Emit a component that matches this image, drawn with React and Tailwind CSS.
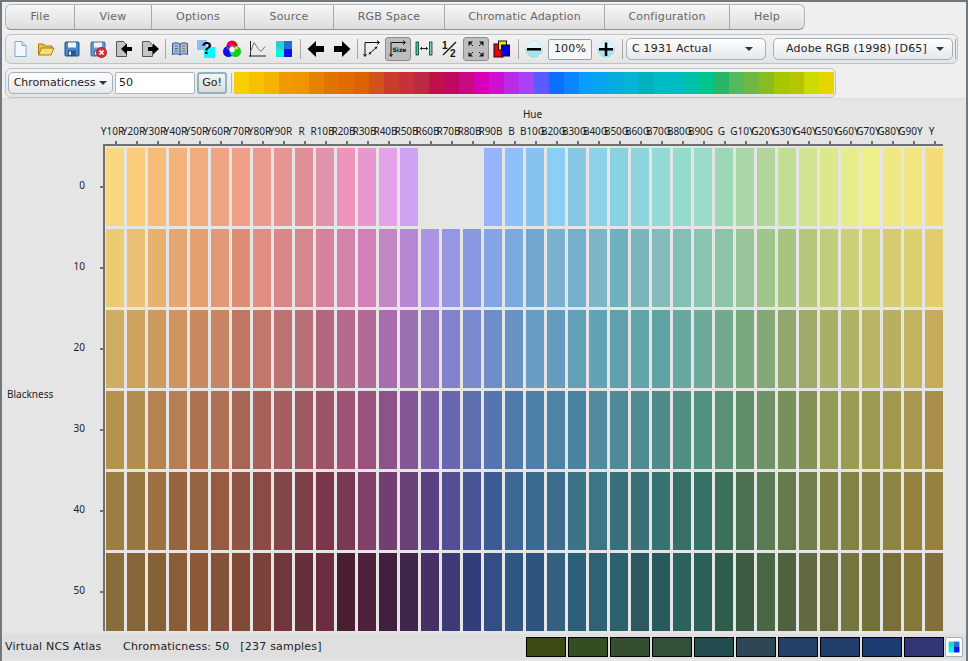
import React from "react";

const UI = { fontFamily: '"DejaVu Sans", sans-serif' };
const CH = { fontFamily: '"Noto Sans", sans-serif' };

const menus = [
  ["File", "w-[68px]"], ["View", "w-[77px]"], ["Options", "w-[93px]"], ["Source", "w-[89px]"],
  ["RGB Space", "w-[111px]"], ["Chromatic Adaption", "w-[160px]"], ["Configuration", "w-[125px]"], ["Help", "w-[75px]"],
];

const hues = ["Y10R","Y20R","Y30R","Y40R","Y50R","Y60R","Y70R","Y80R","Y90R","R","R10B","R20B","R30B","R40B","R50B","R60B","R70B","R80B","R90B","B","B10G","B20G","B30G","B40G","B50G","B60G","B70G","B80G","B90G","G","G10Y","G20Y","G30Y","G40Y","G50Y","G60Y","G70Y","G80Y","G90Y","Y"];

const rows = [
  ["f9d880","f9cb7b","f6bc78","f4b37a","f2ab7e","efa583","f1a088","eb9b8d","e79592","e08f96","e093ab","ee95bc","e898cd","e4a3e8","d0a2f1",null,null,null,"97b3fe","90c0fa","88c3f0","8ccff5","88c7e3","8ed1e8","88d1df","8dd4dd","94d9d6","95dccf","9bdcc8","9dd8b6","aad7a9","b1d59c","c1de97","d1e595","dde88d","e7ed8a","edef8b","efe783","f3e580","f6db7b"],
  ["edcb70","ebbf74","e7b26e","e4a771","e4a070","e09a78","de8e74","e18f82","db8787","d6868d","d7829b","d183a9","d280b7","c487c3","b786d4","ad94e4","9597e0","8698e0","87a5e5","7daade","72a8d0","7ab1d0","76afcb","7eb5c9","70b0bd","7cb4bd","85bcbb","83bfb5","88c5b1","8cc4a8","98c59a","a0c68e","a7c481","b6c87c","c1cc7c","ccd079","d1d374","d6cc6f","ddd06f","e4cd6d"],
  ["cfae62","cda35d","cb9c5e","cf945f","c88a5e","c78664","c17863","c1776a","bc7270","b87176","b36880","b5698c","b36a96","a96cac","9c6fb0","9178bf","8482ce","7a88d0","6f8dca","6893c1","689dc6","659bbd","62a0b8","63a3b8","5fa0ab","61a4aa","5ea3a2","69a8a0","6daa99","73a98c","79a97e","85a877","91a76d","a0aa68","a8b067","b0b264","b8b565","b8ae5f","c3b560","c5ab5b"],
  ["b5934d","b38e4f","b6824f","b67e51","ae7451","af7053","a66654","a5615a","a65f60","9e5862","995566","9e5274","98527c","8d528a","845695","7c60a6","6766ae","5e6fae","5674b0","5079ac","4f80aa","4c83a6","4b84a2","538a9f","4f8a96","4f8a92","50898a","528d83","529180","5a9076","608e66","6f9366","78915b","859257","939a55","9c9b52","9c9b52","a39850","aa9850","a98f49"],
  ["9c7f41","997542","9c7042","976640","946341","965b41","915641","894b45","814647","7e3e4a","7c384b","783954","7f3f66","733e70","6a4079","5a4080","514e92","475395","3c5a93","3e6894","3b6a90","3d6e8f","3c7486","3f7585","376f7b","3b6f75","347370","376f68","347265","3d7159","4b7150","5a7a54","647a4b","727f4c","7e8247","828247","868144","8d8342","938140","968140"],
  ["886c39","866638","866037","895d38","8c5939","845139","814a38","7a413a","6f363b","63303a","6c2e3e","4a1e31","4f213c","41203f","3e254a","453165","3e3a75","323d7b","344e83","2f5580","2f557e","33607c","2c5f78","316273","2d616c","2e585f","285a5b","2d615d","2c5f58","305c4c","3c5c42","496645","4e6140","60693f","696c3e","74753e","73713a","7a6f3a","86773c","84703a"],
];

const strip = ["f5cf00","f7c100","f5b300","f09a00","f09400","e68200","e17400","e06c00","dd6300","d2521a","c73c2a","c8303a","bb2a40","c0104a","bd0a60","c90a85","d600b8","cf10d0","b82ae4","a844f5","5b5cff","0a70ff","0a84ff","0a9dfd","08a4ee","05aede","05b4d6","00b0c0","00bcc8","00bcc0","00c0a8","00c58d","28b56a","52ba5a","6fb940","88bc20","a5c800","b5c500","cddb00","e8d500"];

const swatches = ["3d4a14","344d22","344f30","324f3a","234c4f","2d4756","233f66","1f3c6b","1b3c70","333574"];

function Sep({ w = "w-[6px]" }) {
  return (
    <div className={`${w} flex justify-center shrink-0`}>
      <div className="w-px h-[20px] bg-[#a8a8a8]" />
    </div>
  );
}

function Tool({ children, on }) {
  return (
    <div className={`w-[26px] h-[24px] shrink-0 flex items-center justify-center rounded-[3px] ${on ? "bg-[#bdbdbd] border border-[#8d8d8d]" : ""}`}>
      {children}
    </div>
  );
}

const Svg = ({ children, s = 18 }) => (
  <svg width={s} height={s} viewBox="0 0 18 18">{children}</svg>
);

const Floppy = () => (
  <>
    <rect x="2" y="2" width="14" height="14" rx="1" fill="#4a88c8" stroke="#1d4f8c" />
    <rect x="5" y="2.500" width="8" height="5" fill="#eef4fb" />
    <rect x="5" y="10.500" width="8" height="5.500" fill="#26558f" />
    <rect x="6" y="11.500" width="2" height="3.500" fill="#dce7f3" />
  </>
);

const Gem = () => (
  <>
    <path d="M6 1h6l5 5v6l-5 5H6l-5-5V6z" fill="#a2e4f4" stroke="#a9c9d2" strokeWidth=".6" />
    <path d="M6 1h6l5 5v2.500H1V6z" fill="#dcf6fc" />
  </>
);

const icons = {
  doc: <Svg><path d="M4 1.500h7l4 4v11H4z" fill="#f4f9ff" stroke="#7ea8d6" /><path d="M11 1.500v4h4" fill="#cfe0f3" stroke="#7ea8d6" /></Svg>,
  open: <Svg><path d="M1.500 15V4h5l1.500 2h7v2" fill="#f0c040" stroke="#a87d12" /><path d="M1.500 15l3-7h12.500l-3 7z" fill="#fadf70" stroke="#a87d12" /></Svg>,
  save: <Svg><Floppy /></Svg>,
  saveX: <Svg><g opacity=".85"><Floppy /></g><circle cx="12.500" cy="12.500" r="5" fill="#d8333a" stroke="#a82228" /><path d="M10.500 10.500l4 4M14.500 10.500l-4 4" stroke="#fff" strokeWidth="1.600" /></Svg>,
  docL: <Svg><path d="M1.500 1.500h7l3 3.500v11.500h-10z" fill="#c4c4c4" stroke="#555" /><path d="M17 7v4h-5v3.500L6 9l6-5.500V7z" fill="#000" /></Svg>,
  docR: <Svg><path d="M1.500 1.500h7l3 3.500v11.500h-10z" fill="#c4c4c4" stroke="#555" /><path d="M7 7v4h5v3.500L18 9l-6-5.500V7z" fill="#000" /></Svg>,
  book: <Svg><path d="M1.500 3.500c2.500-1 5.500-1 7.500.5 2-1.500 5-1.500 7.500-.5v11c-2.500-1-5.500-1-7.500.5-2-1.500-5-1.500-7.500-.5z" fill="#a9bedb" stroke="#3a5382" /><path d="M9 4v11" stroke="#3a5382" /><path d="M3.500 6h3.500M3.500 8.500h3.500M3.500 11h3.500" stroke="#4f6c9f" /><path d="M11 6h3.500" stroke="#b5663a" /><path d="M11 8.500h3.500" stroke="#7a9a3a" /><path d="M11 11h3.500" stroke="#4f6c9f" /></Svg>,
  help: <Svg><rect x="0" y="0" width="10" height="10" fill="#8fbcf2" /><rect x="7" y="7" width="11" height="11" fill="#0ff" /><text x="4.500" y="13.500" fontSize="17" fontWeight="700" fill="#000" fontFamily="Liberation Sans, sans-serif">?</text></Svg>,
  wheel: <Svg><circle cx="9" cy="6" r="5.500" fill="#e6002e" /><circle cx="5.500" cy="11.500" r="5.500" fill="#0a10e8" /><circle cx="12.500" cy="11.500" r="5.500" fill="#10d010" /><circle cx="9" cy="9.500" r="2.800" fill="#fff" /><path d="M9 4.500l3 3-1 0-2-1-2 1-1 0z" fill="#ff3cf0" /><circle cx="13.500" cy="8" r="1.500" fill="#ffe800" /><circle cx="5" cy="8" r="1.500" fill="#e000e0" /><circle cx="9" cy="13" r="1.500" fill="#00e0e0" /></Svg>,
  graph: <Svg><path d="M1.500 1v15.500M0 16h17" stroke="#222" fill="none" /><path d="M1.500 12L5 2.500l4 6 3 3 4-5" stroke="#777" fill="none" /></Svg>,
  squares: <Svg s={16}><rect width="9" height="9" fill="#2ccfd0" /><rect x="9" width="9" height="9" fill="#1f6fd8" /><rect y="9" width="9" height="9" fill="#00f7d8" /><rect x="9" y="9" width="9" height="9" fill="#1010e8" /></Svg>,
  left: <Svg><path d="M17 6v6H9v5L0.500 9 9 1v5z" fill="#000" /></Svg>,
  right: <Svg><path d="M1 6v6h8v5l8.500-8L9 1v5z" fill="#000" /></Svg>,
  swap: <Svg><path d="M2 2.500h14M14 .5l2.500 2-2.500 2M2 2.500V16M.5 14L2 16.500 3.500 14" stroke="#111" fill="none" /><path d="M7 13l6-5" stroke="#111" /><path d="M5.500 14.500l3-.5-2-2zM14.500 6.500l-3 .5 2 2z" fill="#111" /></Svg>,
  size: <Svg><path d="M2 2.500h14M14 .5l2.500 2-2.500 2M2 2.500V16M.5 14L2 16.500 3.500 14" stroke="#111" fill="none" /><text x="3.500" y="12" fontSize="6" fontWeight="700" fill="#111" fontFamily="DejaVu Sans, sans-serif">Size</text></Svg>,
  fit: <Svg><rect x="1" y="2" width="2.500" height="13" fill="#20e0a0" stroke="#111" strokeWidth=".7" /><rect x="14.500" y="2" width="2.500" height="13" fill="#70d8b0" stroke="#111" strokeWidth=".7" /><path d="M5.500 8.500h7M7 7l-1.500 1.500L7 10M11 7l1.500 1.500L11 10" stroke="#222" fill="none" /></Svg>,
  half: <Svg><text x="1" y="9" fontSize="10" fontWeight="700" fill="#111" fontFamily="Liberation Sans, sans-serif">1</text><text x="9" y="17" fontSize="10" fontWeight="700" fill="#111" fontFamily="Liberation Sans, sans-serif">2</text><path d="M2 15L15 2" stroke="#111" strokeWidth="1.300" /></Svg>,
  expand: <Svg><path d="M3 3l12 12M15 3L3 15" stroke="#111" /><path d="M1.500 1.500h4.500l-4.500 4.500zM16.500 1.500h-4.500l4.500 4.500zM1.500 16.500h4.500l-4.500-4.500zM16.500 16.500h-4.500l4.500-4.500z" fill="#111" /><path d="M6 6l6 6M12 6l-6 6" stroke="#bdbdbd" strokeWidth="2" /></Svg>,
  layers: <Svg><rect x="1" y="4" width="9" height="13" fill="#f00000" stroke="#111" /><rect x="5.500" y="1" width="8" height="9" fill="#f7e000" stroke="#111" /><rect x="8.500" y="5" width="8" height="11" fill="#0000e0" stroke="#111" /></Svg>,
  minus: <Svg><Gem /><path d="M2 8h14v2.500H2z" fill="#000" /></Svg>,
  plus: <Svg><Gem /><path d="M2 8h14v2.500H2zM7.800 2.500h2.500V16H7.800z" fill="#000" /></Svg>,
};

const Caret = () => <span className="w-0 h-0 border-x-[4px] border-x-transparent border-t-[4px] border-t-[#333] shrink-0" />;

function Select({ label, cls }) {
  return (
    <div className={`${cls} h-[22px] shrink-0 flex items-center justify-between rounded-[5px] border border-[#9fb0be] bg-linear-to-b from-[#ffffff] to-[#e4e7ea] text-[11px] tracking-[0.2px] text-[#222]`}>
      <span>{label}</span>
      <Caret />
    </div>
  );
}

export default function App() {
  return (
    <div style={UI} className="w-[968px] h-[661px] overflow-hidden flex flex-col bg-[#e5e5e5] border-t-2 border-l-2 border-r-2 border-[#70787e] text-[#222]">
      <div className="bg-[#efefef] pl-[3px] pt-[2px] pb-[2px] border-b border-[#dcdcdc] h-[97px] shrink-0 flex flex-col gap-[4px]">
        <div className="flex w-[800px] h-[26px] shrink-0 rounded-[6px] border border-[#b4b4b4] border-b-[#8f8f8f] bg-linear-to-b from-[#f6f6f6] to-[#dedede] overflow-hidden">
          {menus.map(([m, w], i) => (
            <div key={m} className={`${w} ${i ? "border-l border-[#a9a9a9]" : ""} shrink-0 flex items-center justify-center text-[11px] tracking-[0.2px] text-[#666]`}>{m}</div>
          ))}
        </div>

        <div className="flex items-center w-[953px] h-[30px] shrink-0 pl-[1px] rounded-[6px] border border-[#c2c2c2] bg-linear-to-b from-[#f2f2f2] to-[#e4e4e4]">
          <Tool>{icons.doc}</Tool><Tool>{icons.open}</Tool><Tool>{icons.save}</Tool><Tool>{icons.saveX}</Tool><Tool>{icons.docL}</Tool><Tool>{icons.docR}</Tool>
          <Sep w="w-[4px]" />
          <Tool>{icons.book}</Tool><Tool>{icons.help}</Tool><Tool>{icons.wheel}</Tool><Tool>{icons.graph}</Tool><Tool>{icons.squares}</Tool>
          <Sep />
          <Tool>{icons.left}</Tool><Tool>{icons.right}</Tool>
          <Sep w="w-[4px]" />
          <Tool>{icons.swap}</Tool><Tool on>{icons.size}</Tool><Tool>{icons.fit}</Tool><Tool>{icons.half}</Tool><Tool on>{icons.expand}</Tool><Tool>{icons.layers}</Tool>
          <Sep />
          <Tool>{icons.minus}</Tool>
          <div className="w-[44px] h-[21px] ml-px shrink-0 flex items-center justify-center bg-[#f7f7f7] border border-[#8fa0ae] rounded-[2px] text-[11px] tracking-[0.2px] text-[#222]">100%</div>
          <div className="w-px shrink-0" />
          <Tool>{icons.plus}</Tool>
          <Sep w="w-[7px]" />
          <Select label="C 1931 Actual" cls="w-[140px] pl-[5px] pr-[12px]" />
          <div className="w-[7px] shrink-0" />
          <Select label="Adobe RGB (1998) [D65]" cls="w-[180px] pl-[12px] pr-[8px]" />
          <div className="w-px h-[20px] bg-[#a8a8a8] ml-[2px] shrink-0" />
        </div>

        <div className="flex items-center gap-[2px] w-[831px] h-[30px] shrink-0 pl-[2px] rounded-[6px] border border-[#c2c2c2] bg-linear-to-b from-[#f2f2f2] to-[#e4e4e4]">
          <div className="w-[105px] h-[22px] shrink-0 flex items-center justify-center gap-[4px] rounded-[5px] border border-[#9fb0be] bg-linear-to-b from-[#ffffff] to-[#e4e7ea] text-[11px] text-[#222]">
            <span>Chromaticness</span><Caret />
          </div>
          <div className="w-[80px] h-[22px] shrink-0 flex items-center pl-[3px] bg-white border border-[#a9b6c0] rounded-[2px] text-[11px] text-[#222]">50</div>
          <div className="w-[30px] h-[22px] shrink-0 flex items-center justify-center bg-linear-to-b from-[#f4f4f4] to-[#dcdcdc] border-2 border-[#8fb4c4] rounded-[3px] text-[11px] text-[#222]">Go!</div>
          <div className="w-px h-[20px] shrink-0 bg-[#b8b8b8] ml-[2px]" />
          <div className="flex h-[22px] shrink-0">
            {strip.map((c, i) => (
              <div key={i} className="w-[15px] h-full" style={{ background: `#${c}` }} />
            ))}
          </div>
        </div>
      </div>

      <div style={CH} className="flex-1 min-h-0 flex flex-col text-[10px] text-[#1d1d1d]">
        <div className="h-[25px] pl-[117px] w-[944px] flex items-end justify-center shrink-0 leading-[14px] pb-[3px]">Hue</div>
        <div className="flex pl-[103px] shrink-0">
          {hues.map((h) => (
            <div key={h} className="w-[21px] shrink-0 flex flex-col items-center">
              <span className="whitespace-nowrap leading-[14px] mr-[6px]">{h}</span>
              <span className="w-[2px] h-[3px] mt-[3px] bg-[#707070]" />
            </div>
          ))}
        </div>
        <div className="flex flex-1 min-h-0">
          <div className="w-[68px] pl-[5px] pt-[11px] flex items-center shrink-0">Blackness</div>
          <div className="w-[33px] pt-[4px] shrink-0 flex flex-col gap-[3px]">
            {[0, 10, 20, 30, 40, 50].map((b) => (
              <div key={b} className="h-[78px] flex items-center justify-end gap-[15px]">
                <span className="mb-[3px]">{b}</span>
                <span className="w-[3px] h-[2px] bg-[#707070]" />
              </div>
            ))}
          </div>
          <div className="w-[840px] shrink-0 h-[487px] border-l-2 border-t-2 border-[#707070] pl-[1px] pt-[2px]">
            <div className="grid grid-cols-[repeat(40,18px)] auto-rows-[78px] gap-[3px]">
              {rows.flatMap((r, y) =>
                r.map((c, x) => (
                  <div key={`${y}-${x}`} style={c ? { background: `#${c}` } : undefined} />
                ))
              )}
            </div>
          </div>
        </div>
      </div>

      <div className="h-[25px] shrink-0 mb-[2px] flex items-center ml-[1px] bg-[#dfdfdf] rounded-[4px] text-[11px] tracking-[0.2px] text-[#222]">
        <span className="pl-[2px] pt-[2px] w-[120px]">Virtual NCS Atlas</span>
        <span className="pt-[2px]">Chromaticness: 50</span>
        <span className="ml-[11px] pt-[2px]">[237 samples]</span>
        <div className="ml-auto flex items-center mr-[3px]">
          <div className="flex gap-[2px]">
            {swatches.map((c) => (
              <div key={c} className="w-[40px] h-[20px] border border-black" style={{ background: `#${c}` }} />
            ))}
          </div>
          <div className="w-[18px] h-[20px] ml-px flex items-center justify-center rounded-[2px] border border-[#9fb0be] bg-white"><Svg s={14}><rect width="7" height="7" x="2" y="2" fill="#2ccfd0" /><rect x="9" y="2" width="7" height="7" fill="#1f6fd8" /><rect x="2" y="9" width="7" height="7" fill="#00f7d8" /><rect x="9" y="9" width="7" height="7" fill="#1010e8" /></Svg></div>
        </div>
      </div>
    </div>
  );
}
